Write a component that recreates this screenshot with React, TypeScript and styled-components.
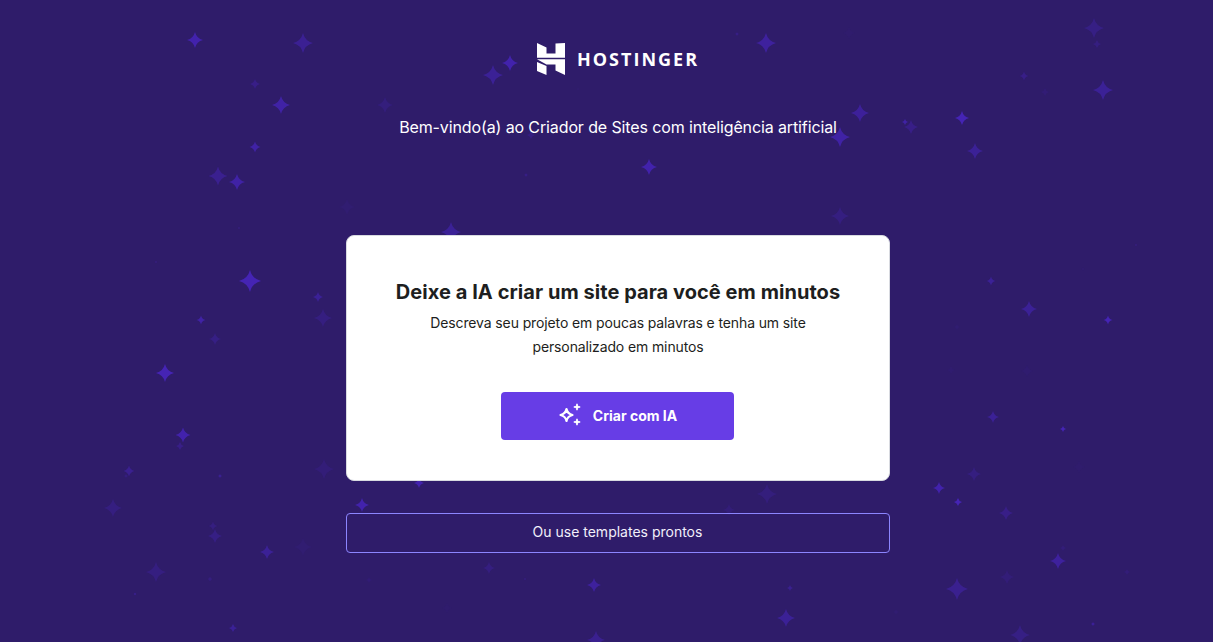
import React from 'react';
import styled, { createGlobalStyle } from 'styled-components';

const Global = createGlobalStyle`
  html, body { margin: 0; padding: 0; height: 100%; background: #2f1c6a; }
  * { box-sizing: border-box; }
  body { font-family: "Inter", "Open Sans", sans-serif; overflow: hidden; }
`;

const Page = styled.div`
  position: relative;
  height: 642px;
  overflow: hidden;
  background: #2f1c6a;
  padding: 43px 0 0 23px;
  display: flex;
  flex-direction: column;
  align-items: center;
`;
const Sky = styled.svg`
  position: absolute;
  inset: 0;
  width: 1213px;
  height: 642px;
`;
const Content = styled.main`
  position: relative;
  width: 544px;
  display: flex;
  flex-direction: column;
  align-items: center;
`;
const Brand = styled.div`
  display: flex;
  align-items: center;
  gap: 12px;
  height: 32px;
`;
const Wordmark = styled.span`
  font-family: "Open Sans", sans-serif;
  font-weight: 700;
  font-size: 18px;
  letter-spacing: 2px;
  color: #fff;
`;
const Welcome = styled.p`
  margin: 32px 0 88px;
  height: 40px;
  line-height: 40px;
  font-size: 16px;
  letter-spacing: -0.12px;
  color: #fff;
  white-space: nowrap;
`;
const Card = styled.section`
  width: 544px;
  height: 246px;
  background: #fff;
  border: 1px solid #d8dae0;
  border-radius: 8px;
  display: flex;
  flex-direction: column;
  align-items: center;
  padding-top: 41px;
`;
const Title = styled.h1`
  margin: 0;
  font-size: 20px;
  line-height: 30px;
  font-weight: 700;
  letter-spacing: 0.05px;
  color: #1d1e20;
  white-space: nowrap;
`;
const Description = styled.p`
  margin: 4px 0 0;
  width: 400px;
  text-align: center;
  font-size: 14px;
  line-height: 24px;
  letter-spacing: -0.12px;
  color: #1d1e20;
`;
const PrimaryButton = styled.button`
  margin: 33px 1px 0 0;
  width: 233px;
  height: 48px;
  padding: 0 0 2px 1px;
  border: 0;
  border-radius: 4px;
  background: #673de6;
  color: #fff;
  font: 700 14px "Inter", sans-serif;
  display: flex;
  align-items: center;
  justify-content: center;
  gap: 12px;
`;
const OutlineButton = styled.button`
  margin-top: 32px;
  width: 544px;
  height: 40px;
  padding: 0 1px 3px 0;
  border: 1px solid #8c85ff;
  border-radius: 4px;
  background: transparent;
  color: #f2f0fb;
  font: 400 14px "Inter", sans-serif;
`;

type S = [number, number, number, number];
const stars: S[] = [
  [195,40,8,.9],[303,43,10,.55],[255,84,5,.4],[281,105,9,.8],[385,105,8,.25],[255,147,5.5,.8],[218,176,9.5,.5],[237,182,8,.8],
  [347,207,8,.1],[239,228,1.5,.3],[156,262,1.5,.3],[250,281,11,1],[318,297,5,.6],[323,318,9,.3],[201,320,4.5,.8],[215,339,6,.35],
  [165,373,9,1],[183,435,7.5,.9],[180,446,4,.4],[129,471,5.5,.5],[126,476,2,.3],[220,476,2,.6],[113,508,9,.3],[324,469,10,.2],
  [362,505,7,.9],[213,526,4.5,.3],[215,536,7,.35],[267,552,7,.6],[303,547,9,.1],[156,572,10,.3],[210,579,2.5,.3],[135,594,1.5,.6],
  [233,628,4,.6],[369,580,3,.15],[451,232,10,.6],[493,75,10,.6],[510,63,8,.9],[860,113,9,.65],[840,137,10,.8],[905,122,3,.8],
  [911,127,7,.4],[962,118,7,1],[975,151,8,.6],[840,216,9,.3],[1094,28,10,.35],[1097,44,4,.3],[1024,76,4.5,.4],[1045,92,4,.15],
  [1103,90,10,.6],[849,33,6,.05],[766,43,10,.7],[737,34,2,.4],[1136,245,1.5,.3],[1083,269,1.5,.1],[991,281,4.5,.6],[1029,309,8,.6],
  [1108,320,4.5,1],[957,327,3,.1],[951,370,4,.08],[1027,371,6,.08],[993,417,6,.6],[1063,429,3,1],[1079,467,6,.05],[974,474,7,.3],
  [939,488,6,.9],[958,502,4,1],[1006,513,7,.4],[1063,548,3,.2],[1058,561,8,.7],[1007,577,7,.2],[1127,572,3,.2],[957,589,11,.5],
  [896,612,3,.1],[1093,624,2,.7],[1020,635,10,.35],[419,483,5,.9],[767,494,10,.25],[489,568,6,.3],[525,579,1.5,.3],[594,585,7,.7],
  [790,588,3,.5],[786,618,9,.6],[596,640,9,.5],[447,608,5,.05],[729,510,6,.2],[649,167,8,.9],[526,175,2,.4],[531,135,4,.3],[578,89,1,.2],
];
const starPath = (x: number, y: number, r: number) => {
  const k = r * 0.2;
  return `M${x} ${y - r}Q${x + k} ${y - k} ${x + r} ${y}Q${x + k} ${y + k} ${x} ${y + r}Q${x - k} ${y + k} ${x - r} ${y}Q${x - k} ${y - k} ${x} ${y - r}Z`;
};

const Logo = () => (
  <svg width="28" height="32" viewBox="0 0 28 32" fill="#fff">
    <path d="M0 0L9.5 4.5V10.5H18.5V.6L28 0V14.8H0Z" />
    <path d="M0 19L9.5 23V32L0 28Z" />
    <path d="M0 16.3H28V32L18.5 27.5V21.5H9.5Z" />
  </svg>
);
const Sparkles = () => (
  <svg width="22" height="24" viewBox="0 0 22 24" fill="none">
    <path d="M7.5 6C8.2 9.6 9.6 11 13.5 12C9.6 13 8.2 14.4 7.5 18C6.8 14.4 5.4 13 1.5 12C5.4 11 6.8 9.6 7.5 6Z" stroke="#fff" strokeWidth="2.2" strokeLinejoin="round" />
    <path d="M18 .8C18.4 3 19 3.6 21.2 4C19 4.4 18.4 5 18 7.2C17.6 5 17 4.4 14.8 4C17 3.6 17.6 3 18 .8Z" fill="#fff" stroke="#fff" strokeWidth="1" strokeLinejoin="round" />
    <path d="M18 15.8C18.4 18 19 18.6 21.2 19C19 19.4 18.4 20 18 22.2C17.6 20 17 19.4 14.8 19C17 18.6 17.6 18 18 15.8Z" fill="#fff" stroke="#fff" strokeWidth="1" strokeLinejoin="round" />
  </svg>
);

export default function App() {
  return (
    <Page>
      <Global />
      <Sky viewBox="0 0 1213 642" aria-hidden="true">
        {stars.map(([x, y, r, o], i) => (
          <path key={i} d={starPath(x, y, r)} fill="#4524b4" opacity={o} />
        ))}
      </Sky>
      <Content>
        <Brand>
          <Logo />
          <Wordmark>HOSTINGER</Wordmark>
        </Brand>
        <Welcome>Bem-vindo(a) ao Criador de Sites com inteligência artificial</Welcome>
        <Card>
          <Title>Deixe a IA criar um site para você em minutos</Title>
          <Description>Descreva seu projeto em poucas palavras e tenha um site personalizado em minutos</Description>
          <PrimaryButton>
            <Sparkles />
            Criar com IA
          </PrimaryButton>
        </Card>
        <OutlineButton>Ou use templates prontos</OutlineButton>
      </Content>
    </Page>
  );
}
